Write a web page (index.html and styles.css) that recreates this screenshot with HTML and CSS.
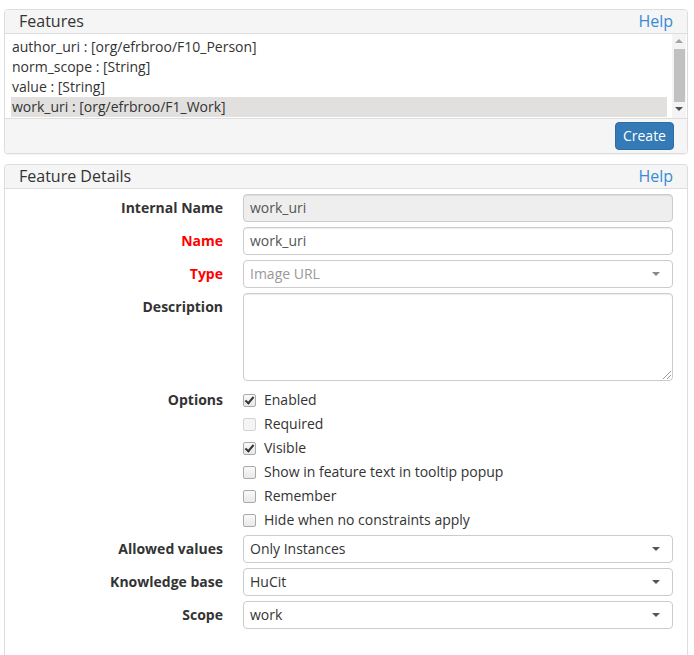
FILE: index.html
```html
<!DOCTYPE html>
<html>
<head>
<meta charset="utf-8">
<link rel="stylesheet" href="styles.css">
</head>
<body>
<div class="panel">
  <div class="panel-heading">
    <span class="title">Features</span>
    <a class="help">Help</a>
  </div>
  <div class="listbox">
    <div class="list">
      <div class="item">author_uri : [org/efrbroo/F10_Person]</div>
      <div class="item">norm_scope : [String]</div>
      <div class="item">value : [String]</div>
      <div class="item selected">work_uri : [org/efrbroo/F1_Work]</div>
    </div>
    <div class="scrollbar">
      <span class="arrow up"></span>
      <span class="thumb"></span>
      <span class="arrow down"></span>
    </div>
  </div>
  <div class="panel-footer">
    <button class="btn">Create</button>
  </div>
</div>

<div class="panel details">
  <div class="panel-heading">
    <span class="title">Feature Details</span>
    <a class="help">Help</a>
  </div>
  <div class="form">
    <label class="lbl">Internal Name</label>
    <div class="control disabled">work_uri</div>

    <label class="lbl req">Name</label>
    <div class="control">work_uri</div>

    <label class="lbl req">Type</label>
    <div class="control select placeholder">Image URL<span class="caret"></span></div>

    <label class="lbl">Description</label>
    <div class="control textarea"><span class="grip"></span></div>

    <label class="lbl opt-lbl">Options</label>
    <div class="options">
      <div class="check"><span class="box checked"></span>Enabled</div>
      <div class="check"><span class="box disabled"></span>Required</div>
      <div class="check"><span class="box checked"></span>Visible</div>
      <div class="check"><span class="box"></span>Show in feature text in tooltip popup</div>
      <div class="check"><span class="box"></span>Remember</div>
      <div class="check"><span class="box"></span>Hide when no constraints apply</div>
    </div>

    <label class="lbl">Allowed values</label>
    <div class="control select">Only Instances<span class="caret"></span></div>

    <label class="lbl">Knowledge base</label>
    <div class="control select">HuCit<span class="caret"></span></div>

    <label class="lbl">Scope</label>
    <div class="control select">work<span class="caret"></span></div>
  </div>
</div>
</body>
</html>
```

FILE: styles.css
```css
* { box-sizing: border-box; }
html, body { margin: 0; background: #fff; }
body {
  padding: 9px 6px 0 4px;
  font-family: "Open Sans", "Liberation Sans", sans-serif;
  font-size: 14px;
  color: #333;
}
.panel {
  border: 1px solid #ddd;
  border-radius: 4px;
  background: #fff;
  box-shadow: 0 1px 1px rgba(0,0,0,0.05);
}
.details {
  margin-top: 10px;
  min-height: 520px;
  border-bottom: none;
  border-radius: 4px 4px 0 0;
}
.panel-heading {
  display: flex;
  justify-content: space-between;
  align-items: center;
  height: 24px;
  padding: 0 14px 1px 14px;
  background: #f5f5f5;
  border-bottom: 1px solid #ddd;
  border-radius: 3px 3px 0 0;
  font-size: 16px;
}
.title { color: #333; }
.help { color: #3a8ad6; text-decoration: none; }
.listbox {
  display: flex;
  height: 84px;
  background: #fff;
}
.list {
  flex: 1;
  padding: 3px 5px 0 6px;
}
.item {
  height: 20px;
  line-height: 20px;
  padding-left: 1px;
  white-space: nowrap;
}
.item.selected { background: #e1e0de; }
.scrollbar {
  width: 14px;
  margin-right: 1px;
  display: flex;
  flex-direction: column;
  align-items: center;
  background: #f4f4f4;
  padding: 0 1px;
}
.arrow {
  width: 0; height: 0;
  border-left: 4px solid transparent;
  border-right: 4px solid transparent;
}
.arrow.up { border-bottom: 4px solid #a3a3a3; margin-top: 5px; }
.arrow.down { border-top: 4px solid #505050; margin-top: 5px; }
.thumb {
  width: 11px;
  height: 53px;
  margin-top: 6px;
  background: #c1c1c1;
}
.panel-footer {
  display: flex;
  justify-content: flex-end;
  padding: 3px 13px 3px 14px;
  background: #f5f5f5;
  border-top: 1px solid #ddd;
  border-radius: 0 0 3px 3px;
}
.btn {
  font-family: inherit;
  font-size: 14px;
  color: #fff;
  background: #337ab7;
  border: 1px solid #2e6da4;
  border-radius: 4px;
  height: 28px;
  padding: 0 7px;
  line-height: 20px;
}
.form {
  display: grid;
  grid-template-columns: 218px 430px;
  column-gap: 20px;
  row-gap: 5px;
  padding: 5px 14px 20px 0;
}
.lbl {
  text-align: right;
  font-weight: bold;
  line-height: 20px;
  padding-top: 4px;
}
.lbl.req { color: #ff0000; }
.control {
  position: relative;
  height: 28px;
  line-height: 20px;
  padding: 3px 6px;
  border: 1px solid #ccc;
  border-radius: 4px;
  background: #fff;
  color: #555;
  box-shadow: inset 0 1px 1px rgba(0,0,0,0.075);
}
.control.disabled { background: #eee; }
.control.placeholder { color: #999; }
.control.select { color: #333; box-shadow: none; }
.control.select.placeholder { color: #999; }
.caret {
  position: absolute;
  right: 12px;
  top: 11px;
  width: 0; height: 0;
  border-left: 4px solid transparent;
  border-right: 4px solid transparent;
  border-top: 4px solid #555;
}
.control.placeholder .caret { border-top-color: #888; }
.textarea { height: 88px; }
.grip {
  position: absolute;
  right: 1px;
  bottom: 1px;
  width: 8px;
  height: 8px;
  background: linear-gradient(135deg, transparent 45%, #999 45%, #999 55%, transparent 55%, transparent 70%, #999 70%, #999 80%, transparent 80%);
}
.opt-lbl { padding-top: 4px; }
.options {
  display: flex;
  flex-direction: column;
  margin-top: 2px;
  margin-bottom: -2px;
}
.check {
  display: flex;
  align-items: center;
  height: 24px;
  line-height: 20px;
}
.box {
  position: relative;
  width: 13px;
  height: 13px;
  margin-right: 8px;
  border: 1px solid #aaa;
  border-radius: 2px;
  background: linear-gradient(#fafafa, #e8e8e8);
}
.box.disabled { border-color: #d4d4d4; background: #f4f4f4; }
.box.checked::after {
  content: "";
  position: absolute;
  left: 3px;
  top: 0px;
  width: 3px;
  height: 7px;
  border-right: 2px solid #333;
  border-bottom: 2px solid #333;
  transform: rotate(40deg);
}
```
